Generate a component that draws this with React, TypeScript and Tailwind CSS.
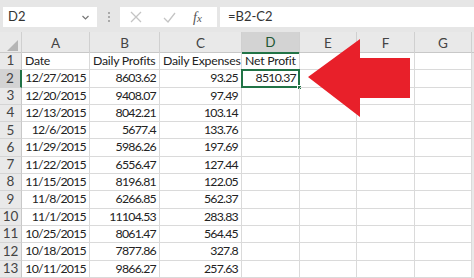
import React from "react";

const cols = ["A", "B", "C", "D", "E", "F", "G"];
const widths = [68, 70, 82, 58, 57, 58, 57];

const data: [string, string, string, string][] = [
  ["12/27/2015", "8603.62", "93.25", "8510.37"],
  ["12/20/2015", "9408.07", "97.49", ""],
  ["12/13/2015", "8042.21", "103.14", ""],
  ["12/6/2015", "5677.4", "133.76", ""],
  ["11/29/2015", "5986.26", "197.69", ""],
  ["11/22/2015", "6556.47", "127.44", ""],
  ["11/15/2015", "8196.81", "122.05", ""],
  ["11/8/2015", "6266.85", "562.37", ""],
  ["11/1/2015", "11104.53", "283.83", ""],
  ["10/25/2015", "8061.47", "564.45", ""],
  ["10/18/2015", "7877.86", "327.8", ""],
  ["10/11/2015", "9866.27", "257.63", ""],
];

const font = { fontFamily: "Lato, 'Open Sans', sans-serif" };

export default function App() {
  const gridCols = "grid grid-cols-[22px_68px_70px_82px_58px_57px_58px_57px_2px]";
  return (
    <div className="relative w-[474px] h-[278px] overflow-hidden bg-white text-[#222]" style={font}>
      {/* Formula bar */}
      <div className="h-[32px] bg-[#e6e6e6] flex items-start pt-[7px] pl-[3px]">
        <div className="w-[94px] h-[20px] bg-white flex items-center justify-between pl-[5px] pr-[8px] text-[13px] text-[#333]">
          <span>D2</span>
          <svg width="7" height="5" viewBox="0 0 7 5"><path d="M0.5 1 L3.5 4 L6.5 1" fill="none" stroke="#777" strokeWidth="1.2" /></svg>
        </div>
        <div className="w-[23px] h-[20px] flex flex-col items-center justify-center gap-[2px]">
          <span className="w-[2px] h-[2px] bg-[#aaa]" />
          <span className="w-[2px] h-[2px] bg-[#aaa]" />
          <span className="w-[2px] h-[2px] bg-[#aaa]" />
        </div>
        <div className="w-[97px] h-[20px] bg-white flex items-center">
          <svg className="ml-[10px]" width="12" height="12" viewBox="0 0 12 12"><path d="M1 1 L11 11 M11 1 L1 11" stroke="#c4c4c4" strokeWidth="1.3" /></svg>
          <svg className="ml-[21px]" width="13" height="11" viewBox="0 0 13 11"><path d="M1 6 L5 10 L12 1" fill="none" stroke="#c4c4c4" strokeWidth="1.3" /></svg>
          <span className="ml-[17px] text-[14px] italic text-[#555]" style={{ fontFamily: "'Liberation Serif', serif" }}>f<span className="text-[11px]">x</span></span>
        </div>
        <div className="ml-[3px] flex-1 h-[20px] bg-white flex items-center pl-[8px] text-[13px] text-[#333]">=B2-C2</div>
      </div>

      {/* Column headers */}
      <div className={`${gridCols} h-[21px] bg-[#e9e9e9] border-b border-[#c8c8c8]`}>
        <div className="relative border-r border-[#d0d0d0]">
          <svg className="absolute right-[3px] bottom-[3px]" width="11" height="11" viewBox="0 0 11 11"><path d="M11 0 L11 11 L0 11 Z" fill="#b5b5b5" /></svg>
        </div>
        {cols.map((c) => (
          <div
            key={c}
            className={`flex items-center justify-center text-[13.5px] text-[#444] border-r border-[#d0d0d0] ${c === "D" ? "bg-[#d3d3d3] border-b-2 border-b-[#217346] text-[#215732]" : ""}`}
          >
            {c}
          </div>
        ))}
        <div />
      </div>

      {/* Rows */}
      {[["Date", "Daily Profits", "Daily Expenses", "Net Profit"] as [string, string, string, string], ...data].map((row, i) => {
        const rn = i + 1;
        const isHeader = i === 0;
        return (
          <div key={rn} className={`${gridCols} h-[17.3px] text-[12.3px] leading-none`}>
            <div
              className={`flex items-center justify-center text-[13.5px] text-[#444] border-b border-[#d4d4d4] ${rn === 2 ? "bg-[#d3d3d3] border-r-2 border-r-[#217346]" : "bg-[#e9e9e9] border-r border-r-[#c8c8c8]"}`}
            >
              {rn}
            </div>
            {widths.map((_, ci) => {
              const v = ci < 4 ? row[ci] : "";
              const selected = rn === 2 && ci === 3;
              return (
                <div
                  key={ci}
                  className={`relative min-w-0 flex items-center border-b border-r border-[#dadada] whitespace-nowrap ${isHeader ? "justify-start pl-[3px] tracking-[-0.25px]" : "justify-end pr-[3px] tracking-[-0.75px]"}`}
                >
                  {selected && (
                    <div className="absolute left-[-1px] top-[-1px] right-[-1px] bottom-[-1px] border-2 border-[#217346]">
                      <div className="absolute right-[-4px] bottom-[-4px] w-[5px] h-[5px] bg-[#217346] border border-white" />
                    </div>
                  )}
                  <span className="relative">{v}</span>
                </div>
              );
            })}
            <div className="bg-[#e9e9e9]" />
          </div>
        );
      })}

      {/* Red arrow overlay */}
      <svg className="absolute left-0 top-0 pointer-events-none" width="474" height="278" viewBox="0 0 474 278">
        <path d="M308 77 L360 39 L360 58 L410 58 L410 98 L360 98 L360 117 Z" fill="#e8202a" />
      </svg>
    </div>
  );
}
